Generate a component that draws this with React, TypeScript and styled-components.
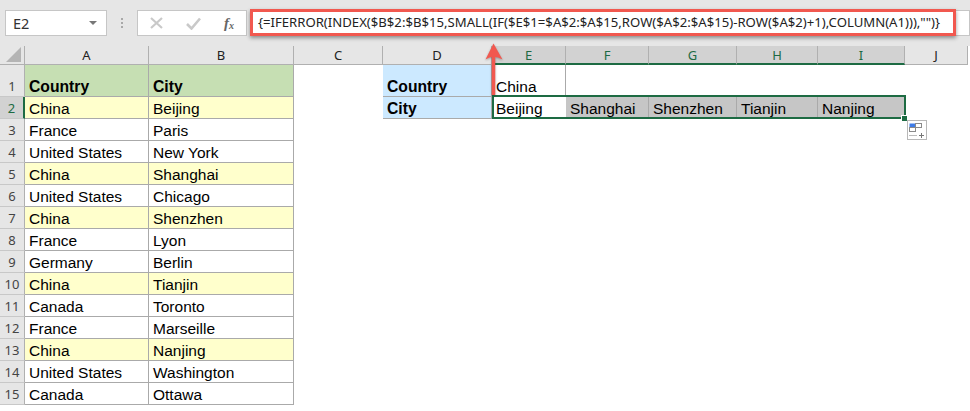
import React from "react";
import styled, { createGlobalStyle } from "styled-components";

const GlobalStyle = createGlobalStyle`
  html, body { margin: 0; padding: 0; background: #fff; }
  body { width: 970px; height: 411px; overflow: hidden; font-family: "Liberation Sans", Arial, sans-serif; }
`;

const columns = [
  { name: "A", width: 124 },
  { name: "B", width: 145 },
  { name: "C", width: 89 },
  { name: "D", width: 109 },
  { name: "E", width: 74, active: true },
  { name: "F", width: 83, active: true },
  { name: "G", width: 88, active: true },
  { name: "H", width: 81, active: true },
  { name: "I", width: 87, active: true },
  { name: "J", width: 63 },
];

const cities = [
  ["China", "Beijing"],
  ["France", "Paris"],
  ["United States", "New York"],
  ["China", "Shanghai"],
  ["United States", "Chicago"],
  ["China", "Shenzhen"],
  ["France", "Lyon"],
  ["Germany", "Berlin"],
  ["China", "Tianjin"],
  ["Canada", "Toronto"],
  ["France", "Marseille"],
  ["China", "Nanjing"],
  ["United States", "Washington"],
  ["Canada", "Ottawa"],
];

const results = ["Shanghai", "Shenzhen", "Tianjin", "Nanjing"];
const gridTemplate = `25px ${columns.map((c) => c.width + "px").join(" ")}`;

export default function App() {
  return (
    <Page>
      <GlobalStyle />
      <Toolbar>
        <NameBox>
          <span>E2</span>
          <Caret />
        </NameBox>
        <Grip>
          <i />
          <i />
          <i />
        </Grip>
        <FormulaButtons>
          <svg width="13" height="12" viewBox="0 0 13 12">
            <path d="M1 1 L12 11 M12 1 L1 11" stroke="#c9c9c9" strokeWidth="2.2" />
          </svg>
          <svg width="15" height="13" viewBox="0 0 15 13">
            <path d="M1 7 L5.5 11.5 L14 1.5" stroke="#c9c9c9" strokeWidth="2.6" fill="none" />
          </svg>
          <Fx>
            f<sub>x</sub>
          </Fx>
        </FormulaButtons>
        <FormulaBar>
          <FormulaText>
            {'{=IFERROR(INDEX($B$2:$B$15,SMALL(IF($E$1=$A$2:$A$15,ROW($A$2:$A$15)-ROW($A$2)+1),COLUMN(A1))),"")}'}
          </FormulaText>
        </FormulaBar>
      </Toolbar>

      <Sheet>
        <Grid style={{ gridTemplateColumns: gridTemplate }}>
          <Corner>
            <svg width="17" height="17" viewBox="0 0 17 17">
              <path d="M16 1 V16 H1 Z" fill="#b4b4b4" />
            </svg>
          </Corner>
          {columns.map((c) => (
            <ColHead key={c.name} $active={c.active}>
              {c.name}
            </ColHead>
          ))}

          <RowHead>1</RowHead>
          <Cell $tone="green" $bold>Country</Cell>
          <Cell $tone="green" $bold>City</Cell>
          <Cell />
          <Cell $tone="blue" $bold $border>Country</Cell>
          <Cell $border>China</Cell>
          <Blank $span={5} />

          {cities.map(([country, city], i) => {
            const tone = country === "China" ? "yellow" : undefined;
            return (
              <React.Fragment key={city}>
                <RowHead $active={i === 0}>{i + 2}</RowHead>
                <Cell $tone={tone} $border>{country}</Cell>
                <Cell $tone={tone} $border>{city}</Cell>
                {i === 0 ? (
                  <>
                    <Cell />
                    <Cell $tone="blue" $bold $border>City</Cell>
                    <Cell>Beijing</Cell>
                    {results.map((r) => (
                      <Cell key={r} $tone="gray" $border>{r}</Cell>
                    ))}
                    <Cell />
                  </>
                ) : (
                  <Blank $span={8} />
                )}
              </React.Fragment>
            );
          })}
        </Grid>

        <SelectionBox>
          <Handle />
        </SelectionBox>
        <QuickAnalysis>
          <svg width="16" height="16" viewBox="0 0 16 16">
            <rect x="0.5" y="1.5" width="6" height="4" fill="#3f7ce8" />
            <rect x="6.5" y="1.5" width="6" height="4" fill="#fff" stroke="#8a8a8a" />
            <rect x="0.5" y="5.5" width="6" height="4" fill="#fff" stroke="#8a8a8a" />
            <path d="M0.5 13.5 H8" stroke="#777" strokeDasharray="1 1" />
            <path d="M10 13.5 H15 M12.5 11 V16" stroke="#777" />
          </svg>
        </QuickAnalysis>
        <Arrow width="18" height="52" viewBox="0 0 18 52">
          <path d="M8.5 52 V10" stroke="#f1584f" strokeWidth="3.5" />
          <path d="M8.5 0.5 L17.5 16.5 Q8.5 11 0.5 16.5 Z" fill="#f1584f" />
        </Arrow>
      </Sheet>
    </Page>
  );
}

const Page = styled.div`
  width: 970px;
  height: 411px;
  display: flex;
  flex-direction: column;
  background: #fff;
  overflow: hidden;
`;

const Toolbar = styled.div`
  flex: 0 0 46px;
  box-sizing: border-box;
  padding: 10px 0 0 5px;
  display: flex;
  align-items: flex-start;
  background: #e6e6e6;
`;

const NameBox = styled.div`
  width: 102px;
  height: 26px;
  box-sizing: border-box;
  background: #fff;
  border: 1px solid #c6c6c6;
  display: flex;
  align-items: center;
  justify-content: space-between;
  padding: 0 9px 0 7px;
  font-family: "Noto Sans", sans-serif;
  font-size: 14.5px;
  color: #333;
`;

const Caret = styled.div`
  width: 0;
  height: 0;
  border-left: 4px solid transparent;
  border-right: 4px solid transparent;
  border-top: 4px solid #777;
`;

const Grip = styled.div`
  width: 30px;
  height: 26px;
  display: flex;
  flex-direction: column;
  align-items: center;
  justify-content: center;
  gap: 2px;
  i {
    width: 2px;
    height: 2px;
    background: #a8a8a8;
  }
`;

const FormulaButtons = styled.div`
  width: 110px;
  height: 26px;
  box-sizing: border-box;
  background: #fff;
  border: 1px solid #c6c6c6;
  display: flex;
  align-items: center;
  justify-content: space-between;
  padding: 0 12px;
`;

const Fx = styled.span`
  font-family: "Liberation Serif", serif;
  font-style: italic;
  font-weight: 700;
  font-size: 15px;
  line-height: 15px;
  color: #666;
  sub {
    font-size: 10px;
    line-height: 0;
    vertical-align: -1px;
  }
`;

const FormulaBar = styled.div`
  flex: 1;
  height: 26px;
  margin-left: 3px;
  background: #fff;
  box-sizing: border-box;
  border: 1px solid #c6c6c6;
  border-left: none;
  position: relative;
`;

const FormulaText = styled.div`
  position: absolute;
  left: 0;
  top: -2px;
  width: 695px;
  height: 21px;
  border: 3px solid #f1584f;
  box-shadow: 0 2px 4px rgba(0, 0, 0, 0.4);
  background: #fff;
  font-family: "Noto Sans", sans-serif;
  font-size: 13.15px;
  line-height: 21px;
  padding-left: 5px;
  color: #222;
  white-space: nowrap;
  overflow: hidden;
`;

const Sheet = styled.div`
  position: relative;
  flex: 1;
  background: #fff;
`;

const Grid = styled.div`
  display: grid;
  grid-template-rows: 19px 32px;
  grid-auto-rows: 22px;
  background: #fff;
`;

const Corner = styled.div`
  background: #e6e6e6;
  border-right: 1px solid #b0b0b0;
  border-bottom: 1px solid #b0b0b0;
  box-sizing: border-box;
  display: flex;
  align-items: flex-end;
  justify-content: flex-end;
  padding: 0 2px 1px 0;
`;

const ColHead = styled.div<{ $active?: boolean }>`
  background: ${(p) => (p.$active ? "#d2d2d2" : "#e6e6e6")};
  color: ${(p) => (p.$active ? "#1d6b43" : "#222")};
  border-right: 1px solid #b0b0b0;
  border-bottom: ${(p) => (p.$active ? "2px solid #1d6b43" : "1px solid #b0b0b0")};
  box-sizing: border-box;
  font-family: "Noto Sans", sans-serif;
  font-size: 13px;
  display: flex;
  align-items: center;
  justify-content: center;
`;

const RowHead = styled.div<{ $active?: boolean }>`
  background: ${(p) => (p.$active ? "#d2d2d2" : "#e6e6e6")};
  color: ${(p) => (p.$active ? "#1d6b43" : "#444")};
  border-right: ${(p) => (p.$active ? "2px solid #1d6b43" : "1px solid #b0b0b0")};
  border-bottom: 1px solid #c8c8c8;
  box-sizing: border-box;
  font-family: "Noto Sans", sans-serif;
  font-size: 13px;
  display: flex;
  align-items: flex-end;
  justify-content: center;
  padding-bottom: 1px;
`;

const toneColors: Record<string, string> = {
  green: "#c6dfb3",
  yellow: "#ffffcc",
  blue: "#cce9ff",
  gray: "#c6c6c6",
};

const Cell = styled.div<{ $tone?: string; $bold?: boolean; $border?: boolean }>`
  background: ${(p) => (p.$tone ? toneColors[p.$tone] : "#fff")};
  font-weight: ${(p) => (p.$bold ? 700 : 400)};
  font-size: ${(p) => (p.$bold ? "15.7px" : "15.5px")};
  line-height: 18px;
  color: #000;
  box-sizing: border-box;
  padding: 0 0 0 4px;
  display: flex;
  align-items: flex-end;
  white-space: nowrap;
  border-right: 1px solid ${(p) => (p.$border || p.$tone ? "#aaa" : "transparent")};
  border-bottom: 1px solid ${(p) => (p.$border || p.$tone ? "#aaa" : "transparent")};
`;

const Blank = styled.div<{ $span: number }>`
  grid-column: span ${(p) => p.$span};
`;

const SelectionBox = styled.div`
  position: absolute;
  left: 492px;
  top: 49px;
  width: 414px;
  height: 24px;
  box-sizing: border-box;
  border: 2px solid #1d6b43;
  pointer-events: none;
`;

const Handle = styled.div`
  position: absolute;
  right: -4px;
  bottom: -5px;
  width: 5px;
  height: 5px;
  background: #1d6b43;
  border: 1px solid #fff;
`;

const QuickAnalysis = styled.div`
  position: absolute;
  left: 907px;
  top: 74px;
  width: 20px;
  height: 20px;
  box-sizing: border-box;
  background: #fff;
  border: 1px solid #b8b8b8;
  display: flex;
  align-items: center;
  justify-content: center;
`;

const Arrow = styled.svg`
  position: absolute;
  left: 485px;
  top: -3px;
  overflow: visible;
  filter: drop-shadow(0 1px 1px rgba(0, 0, 0, 0.3));
`;
